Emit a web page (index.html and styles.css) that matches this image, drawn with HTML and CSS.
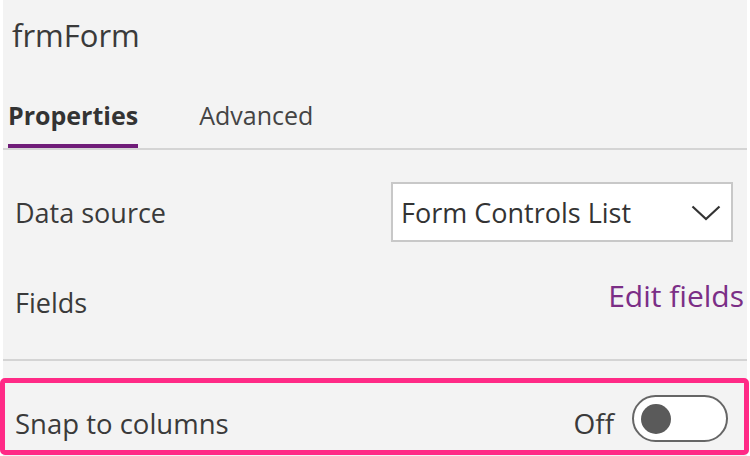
FILE: index.html
```html
<!DOCTYPE html>
<html>
<head>
<meta charset="utf-8">
<link rel="stylesheet" href="styles.css">
</head>
<body>
<div class="panel">
  <div class="title">frmForm</div>
  <div class="tabs">
    <div class="tab active">Properties</div>
    <div class="tab">Advanced</div>
  </div>
  <div class="row row-source">
    <span class="label">Data source</span>
    <div class="select">
      <span>Form Controls List</span>
      <svg class="chev" width="30" height="16" viewBox="0 0 30 16"><path d="M1.5 1.5 L15 14 L28.5 1.5" fill="none" stroke="#333" stroke-width="2.2"/></svg>
    </div>
  </div>
  <div class="row row-fields">
    <span class="label">Fields</span>
    <span class="link">Edit fields</span>
  </div>
  <div class="divider"></div>
  <div class="highlight">
    <span class="label">Snap to columns</span>
    <div class="toggle-wrap">
      <span class="state">Off</span>
      <div class="toggle"><div class="knob"></div></div>
    </div>
  </div>
</div>
</body>
</html>
```
FILE: styles.css
```css
html, body {
  margin: 0;
  padding: 0;
  background: #ffffff;
}
body {
  font-family: "Open Sans", "Noto Sans", sans-serif;
  color: #333333;
}
.panel {
  margin: 0 3px;
  height: 456px;
  background: #f3f3f3;
  display: flex;
  flex-direction: column;
}
.title {
  font-size: 31px;
  line-height: 40px;
  padding: 15px 0 0 9px;
  height: 55px;
  color: #3a3a3a;
}
.tabs {
  margin-top: 20px;
  display: flex;
  gap: 61px;
  border-bottom: 2px solid #d4d4d4;
  padding-left: 5px;
}
.tab {
  font-size: 25px;
  line-height: 34px;
  padding-top: 8px;
  height: 50px;
  color: #444444;
}
.tab.active {
  font-weight: 700;
  color: #333333;
  border-bottom: 4px solid #6f1c78;
  height: 46px;
}
.row {
  display: flex;
  align-items: center;
  justify-content: space-between;
  padding-left: 12px;
}
.label {
  font-size: 27px;
  color: #3a3a3a;
}
.row-source {
  margin-top: 32px;
  height: 60px;
  padding-right: 14px;
}
.select {
  width: 342px;
  height: 60px;
  box-sizing: border-box;
  border: 2px solid #c8c8c8;
  background: #ffffff;
  display: flex;
  align-items: center;
  justify-content: space-between;
  padding: 0 10px 0 8px;
  font-size: 27px;
  color: #333333;
}
.chev {
  margin-top: 2px;
}
.row-fields {
  margin-top: 30px;
  height: 60px;
  padding-right: 3px;
}
.link {
  font-size: 30px;
  color: #7b2e86;
  margin-bottom: 13px;
}
.divider {
  margin-top: 27px;
  height: 2px;
  background: #d4d4d4;
}
.highlight {
  margin: 17px -2px 0 -3px;
  height: 77px;
  box-sizing: border-box;
  border: 5px solid #ff2a86;
  border-radius: 5px;
  display: flex;
  align-items: center;
  justify-content: space-between;
  padding: 0 16px 0 10px;
}
.highlight .label {
  margin-top: 14px;
  font-size: 27.5px;
}
.toggle-wrap {
  display: flex;
  align-items: center;
  gap: 18px;
}
.state {
  font-size: 28px;
  color: #3a3a3a;
  margin-top: 12px;
}
.toggle {
  width: 96px;
  height: 47px;
  box-sizing: border-box;
  border: 2.5px solid #666666;
  border-radius: 24px;
  background: #ffffff;
  display: flex;
  align-items: center;
  padding-left: 7px;
  margin-top: 4px;
}
.knob {
  width: 30px;
  height: 30px;
  border-radius: 50%;
  background: #5a5a5a;
}
```
